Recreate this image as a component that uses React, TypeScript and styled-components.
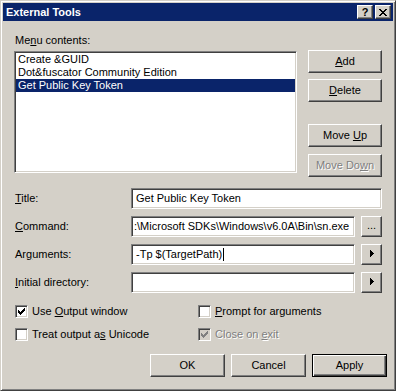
import React from 'react';
import styled, { createGlobalStyle } from 'styled-components';

const Global = createGlobalStyle`
  html, body { margin: 0; padding: 0; background: #d4d0c8; }
  body {
    font-family: Tahoma, "Liberation Sans", Arial, sans-serif;
    font-size: 11px;
    color: #000;
  }
  * { box-sizing: border-box; }
`;

const Window = styled.div`
  width: 396px;
  height: 391px;
  background: #d4d0c8;
  border: 1px solid;
  border-color: #d4d0c8 #404040 #404040 #d4d0c8;
  box-shadow: inset 1px 1px #fff, inset -1px -1px #808080;
  padding: 2px;
  display: flex;
  flex-direction: column;
`;

const TitleBar = styled.div`
  height: 18px;
  background: #0a246a;
  display: flex;
  align-items: center;
  padding: 0 2px 0 3px;
  flex-shrink: 0;
`;

const TitleText = styled.span`
  color: #fff;
  font-weight: bold;
  font-size: 11px;
  line-height: 13px;
`;

const CaptionButtons = styled.div`
  margin-left: auto;
  display: flex;
  gap: 2px;
`;

const CaptionButton = styled.div`
  width: 16px;
  height: 14px;
  background: #d4d0c8;
  border: 1px solid;
  border-color: #fff #404040 #404040 #fff;
  box-shadow: inset -1px -1px #808080;
  display: flex;
  align-items: center;
  justify-content: center;
  font-weight: bold;
  font-size: 11px;
  line-height: 11px;
`;

const Body = styled.div`
  flex: 1;
  display: flex;
  flex-direction: column;
  padding: 13px 6px 0 11px;
`;

const Content = styled.div`
  padding-right: 5px;
  display: flex;
  flex-direction: column;
`;

const Label = styled.div`
  line-height: 13px;
  padding-left: 1px;
  white-space: nowrap;
`;

const ListRow = styled.div`
  display: flex;
  align-items: flex-start;
  height: 122px;
  margin-top: 4px;
`;

const ListBox = styled.div`
  width: 283px;
  height: 122px;
  background: #fff;
  border: 1px solid;
  border-color: #808080 #fff #fff #808080;
  box-shadow: inset 1px 1px #404040, inset -1px -1px #d4d0c8;
  padding: 1px 1px 2px 1px;
  display: flex;
  flex-direction: column;
`;

const ListItem = styled.div<{ $selected?: boolean }>`
  height: 13px;
  line-height: 13px;
  padding-left: 2px;
  white-space: nowrap;
  background: ${(p) => (p.$selected ? '#0a246a' : 'transparent')};
  color: ${(p) => (p.$selected ? '#fff' : '#000')};
`;

const SideButtons = styled.div`
  margin-left: auto;
  margin-top: -1px;
  display: flex;
  flex-direction: column;
  gap: 6px;
`;

const Button = styled.button<{ $default?: boolean; $width?: number; $space?: number }>`
  width: ${(p) => p.$width ?? 74}px;
  height: 23px;
  flex-shrink: 0;
  margin: ${(p) => p.$space ?? 0}px 0 0 0;
  padding: 0;
  font: inherit;
  line-height: 13px;
  color: #000;
  background: #d4d0c8;
  border: 1px solid;
  ${(p) =>
    p.$default
      ? `border-color: #000;
         box-shadow: inset 1px 1px #fff, inset -1px -1px #404040, inset -2px -2px #808080;`
      : `border-color: #fff #404040 #404040 #fff;
         box-shadow: inset -1px -1px #808080;`}
  display: flex;
  align-items: center;
  justify-content: center;
  &:disabled {
    color: #808080;
    text-shadow: 1px 1px #fff;
  }
`;

const Fields = styled.div`
  margin-top: 15px;
  display: grid;
  grid-template-columns: 111px 1fr 21px;
  grid-auto-rows: 21px;
  column-gap: 6px;
  row-gap: 7px;
  align-items: center;
`;

const TextBox = styled.div<{ $span?: boolean }>`
  grid-column: ${(p) => (p.$span ? '2 / 4' : '2 / 3')};
  height: 21px;
  background: #fff;
  border: 1px solid;
  border-color: #808080 #fff #fff #808080;
  box-shadow: inset 1px 1px #404040, inset -1px -1px #d4d0c8;
  padding: 0 3px 0 4px;
  display: flex;
  align-items: center;
  overflow: hidden;
  white-space: nowrap;
  line-height: 13px;
`;

const ScrolledText = styled(TextBox)`
  padding-left: 2px;
`;

const Caret = styled.span`
  display: inline-block;
  width: 1px;
  height: 13px;
  background: #000;
  margin-left: 1px;
`;

const SmallButton = styled(Button)`
  width: 21px;
  height: 21px;
  margin: 0;
  padding-bottom: 2px;
`;

const Checks = styled.div`
  margin-top: 12px;
  padding-left: 1px;
  display: grid;
  grid-template-columns: 183px 1fr;
  row-gap: 10px;
`;

const CheckRow = styled.div<{ $disabled?: boolean }>`
  display: flex;
  align-items: center;
  gap: 4px;
  height: 13px;
  line-height: 13px;
  white-space: nowrap;
  color: ${(p) => (p.$disabled ? '#808080' : '#000')};
  text-shadow: ${(p) => (p.$disabled ? '1px 1px #fff' : 'none')};
`;

const CheckBox = styled.div<{ $disabled?: boolean }>`
  width: 13px;
  height: 13px;
  flex-shrink: 0;
  background: ${(p) => (p.$disabled ? '#d4d0c8' : '#fff')};
  border: 1px solid;
  border-color: #808080 #fff #fff #808080;
  box-shadow: inset 1px 1px #404040, inset -1px -1px #d4d0c8;
  display: flex;
  align-items: center;
  justify-content: center;
`;

const Footer = styled.div`
  margin-top: 13px;
  display: flex;
  justify-content: flex-end;
  gap: 6px;
`;

const U = styled.span`
  text-decoration: underline;
`;

const Check = ({ color = '#000' }: { color?: string }) => (
  <svg width="7" height="7" viewBox="0 0 7 7" shapeRendering="crispEdges">
    <path
      fill={color}
      d="M0 2h1v3H0zM1 3h1v3H1zM2 4h1v3H2zM3 3h1v3H3zM4 2h1v3H4zM5 1h1v3H5zM6 0h1v3H6z"
    />
  </svg>
);

const Arrow = () => (
  <svg width="4" height="7" viewBox="0 0 4 7" shapeRendering="crispEdges">
    <path fill="#000" d="M0 0h1v7H0zM1 1h1v5H1zM2 2h1v3H2zM3 3h1v1H3z" />
  </svg>
);

const CloseGlyph = () => (
  <svg width="8" height="7" viewBox="0 0 8 7" shapeRendering="crispEdges">
    <path
      fill="#000"
      d="M0 0h2v1H0zM6 0h2v1H6zM1 1h2v1H1zM5 1h2v1H5zM2 2h4v1H2zM3 3h2v1H3zM2 4h4v1H2zM1 5h2v1H1zM5 5h2v1H5zM0 6h2v1H0zM6 6h2v1H6z"
    />
  </svg>
);

export default function App() {
  return (
    <>
      <Global />
      <Window>
        <TitleBar>
          <TitleText>External Tools</TitleText>
          <CaptionButtons>
            <CaptionButton>?</CaptionButton>
            <CaptionButton>
              <CloseGlyph />
            </CaptionButton>
          </CaptionButtons>
        </TitleBar>
        <Body>
          <Content>
            <Label>
              Me<U>n</U>u contents:
            </Label>
            <ListRow>
              <ListBox>
                <ListItem>Create &amp;GUID</ListItem>
                <ListItem>Dot&amp;fuscator Community Edition</ListItem>
                <ListItem $selected>Get Public Key Token</ListItem>
              </ListBox>
              <SideButtons>
                <Button>
                  <U>A</U>dd
                </Button>
                <Button>
                  <U>D</U>elete
                </Button>
                <Button $space={16}>
                  Move&nbsp;<U>U</U>p
                </Button>
                <Button $space={1} disabled>
                  Move Do<U>w</U>n
                </Button>
              </SideButtons>
            </ListRow>
            <Fields>
              <Label>
                <U>T</U>itle:
              </Label>
              <TextBox $span>Get Public Key Token</TextBox>
              <Label>
                <U>C</U>ommand:
              </Label>
              <ScrolledText>:\Microsoft SDKs\Windows\v6.0A\Bin\sn.exe</ScrolledText>
              <SmallButton>...</SmallButton>
              <Label>
                Ar<U>g</U>uments:
              </Label>
              <TextBox>
                -Tp $(TargetPath)
                <Caret />
              </TextBox>
              <SmallButton>
                <Arrow />
              </SmallButton>
              <Label>
                <U>I</U>nitial directory:
              </Label>
              <TextBox />
              <SmallButton>
                <Arrow />
              </SmallButton>
            </Fields>
            <Checks>
              <CheckRow>
                <CheckBox>
                  <Check />
                </CheckBox>
                <span>
                  Use <U>O</U>utput window
                </span>
              </CheckRow>
              <CheckRow>
                <CheckBox />
                <span>
                  <U>P</U>rompt for arguments
                </span>
              </CheckRow>
              <CheckRow>
                <CheckBox />
                <span>
                  Treat output a<U>s</U> Unicode
                </span>
              </CheckRow>
              <CheckRow $disabled>
                <CheckBox $disabled>
                  <Check color="#808080" />
                </CheckBox>
                <span>
                  Close on <U>e</U>xit
                </span>
              </CheckRow>
            </Checks>
          </Content>
          <Footer>
            <Button $width={75}>OK</Button>
            <Button $width={75}>Cancel</Button>
            <Button $width={75} $default>
              Apply
            </Button>
          </Footer>
        </Body>
      </Window>
    </>
  );
}
